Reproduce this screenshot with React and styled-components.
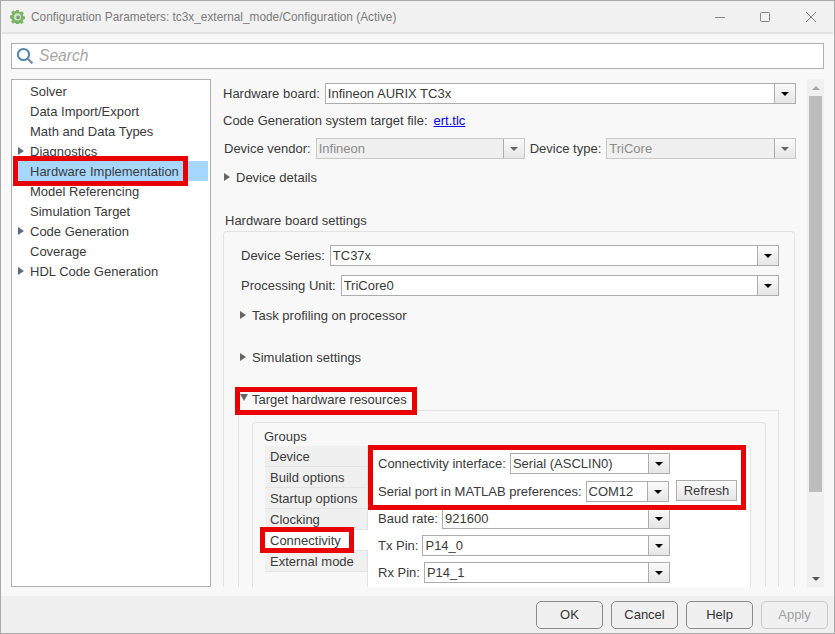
import React from "react";
import styled, { createGlobalStyle } from "styled-components";

const GlobalStyle = createGlobalStyle`
  html, body {
    margin: 0;
    padding: 0;
    background: #fff;
  }
  * {
    box-sizing: border-box;
  }
`;

const treeItems = [
  { label: "Solver" },
  { label: "Data Import/Export" },
  { label: "Math and Data Types" },
  { label: "Diagnostics", branch: true },
  { label: "Hardware Implementation", selected: true },
  { label: "Model Referencing" },
  { label: "Simulation Target" },
  { label: "Code Generation", branch: true },
  { label: "Coverage" },
  { label: "HDL Code Generation", branch: true },
];

const groupTabs = ["Device", "Build options", "Startup options", "Clocking", "Connectivity", "External mode"];

const App = () => {
  return (
    <Window>
      <GlobalStyle />
      <TitleBar>
        <svg width="15" height="15" viewBox="0 0 16 16">
          <path
            d="M6.6 1h2.8l.4 1.9 1.3.6 1.7-1 1.9 2-1 1.6.5 1.4 1.8.4v2.8l-1.8.4-.6 1.4 1 1.6-2 1.9-1.6-1-1.4.5-.4 1.5H6.6l-.4-1.7-1.4-.6-1.6 1-2-2 1-1.6-.5-1.3L0 9.9V7l1.7-.4.6-1.4-1-1.6 2-1.9 1.6 1 1.4-.6z"
            fill="#79b565"
          />
          <circle cx="8" cy="8.4" r="3.8" fill="#cfe3c2" />
          <circle cx="8.6" cy="9" r="2" fill="#7f9d78" />
        </svg>
        <TitleText>Configuration Parameters: tc3x_external_mode/Configuration (Active)</TitleText>
        <WindowControls>
          <svg width="102" height="12" viewBox="0 0 102 12" fill="none" stroke="#858585">
            <path d="M0 6.5h10" />
            <rect x="45.5" y="1.5" width="9" height="9" rx="1" />
            <path d="M91 1l10 10M101 1L91 11" />
          </svg>
        </WindowControls>
      </TitleBar>

      <Main>
        <SearchBox>
          <svg width="18" height="18" viewBox="0 0 18 18" fill="none">
            <circle cx="7.5" cy="7.5" r="5.6" stroke="#5585ad" strokeWidth="2" />
            <path d="M11.8 11.8l4.6 4.6" stroke="#7a8a99" strokeWidth="2.2" />
          </svg>
          <SearchText>Search</SearchText>
        </SearchBox>

        <Content>
          <Tree>
            {treeItems.map((item) => (
              <TreeRow key={item.label} $selected={item.selected}>
                {item.branch && <TreeCaret />}
                <TreeLabel>
                  {item.label}
                  {item.selected && <Highlight $inset="-5px" />}
                </TreeLabel>
              </TreeRow>
            ))}
          </Tree>

          <PaneFrame>
            <Pane>
              <Row $top={4}>
                <Label>Hardware board:</Label>
                <Combo value="Infineon AURIX TC3x" />
              </Row>
              <TextRow $top={6}>
                <Label>Code Generation system target file:</Label>
                <Link>ert.tlc</Link>
              </TextRow>
              <Row $top={8}>
                <Label $left={1}>Device vendor:</Label>
                <Combo value="Infineon" disabled width={209} />
                <Label>Device type:</Label>
                <Combo value="TriCore" disabled />
              </Row>
              <Disclosure $top={8} $left={1}>
                <Caret />
                Device details
              </Disclosure>
              <SectionTitle>Hardware board settings</SectionTitle>

              <BoardPanel>
                <IndentRow $top={13}>
                  <Label>Device Series:</Label>
                  <Combo value="TC37x" />
                </IndentRow>
                <IndentRow $top={9}>
                  <Label>Processing Unit:</Label>
                  <Combo value="TriCore0" />
                </IndentRow>
                <Disclosure $top={9} $left={2}>
                  <Caret />
                  Task profiling on processor
                </Disclosure>
                <Disclosure $top={22} $left={2}>
                  <Caret />
                  Simulation settings
                </Disclosure>
                <Disclosure $top={22} $left={2}>
                  <Caret $open />
                  Target hardware resources
                  <Highlight $inset="-2px -10px -6px -5px" />
                </Disclosure>

                <TargetPanel>
                  <GroupsPanel>
                    <GroupsLabel>Groups</GroupsLabel>
                    <TabSet>
                      <TabList>
                        {groupTabs.map((tab) => (
                          <Tab key={tab} $active={tab === "Connectivity"}>
                            {tab}
                            {tab === "Connectivity" && <Highlight $inset="-3px 14px -3px -5px" />}
                          </Tab>
                        ))}
                      </TabList>
                      <TabBody>
                        <Highlight $inset="-2px auto auto 0" $width={378} $height={65} />
                        <PinRow $top={6}>
                          <Label>Connectivity interface:</Label>
                          <Combo value="Serial (ASCLIN0)" />
                        </PinRow>
                        <PinRow $top={7} $withButton>
                          <Label>Serial port in MATLAB preferences:</Label>
                          <Combo value="COM12" />
                          <SmallButton>Refresh</SmallButton>
                        </PinRow>
                        <PinRow $top={6}>
                          <Label>Baud rate:</Label>
                          <Combo value="921600" />
                        </PinRow>
                        <PinRow $top={6}>
                          <Label>Tx Pin:</Label>
                          <Combo value="P14_0" />
                        </PinRow>
                        <PinRow $top={6}>
                          <Label>Rx Pin:</Label>
                          <Combo value="P14_1" />
                        </PinRow>
                      </TabBody>
                    </TabSet>
                  </GroupsPanel>
                </TargetPanel>
              </BoardPanel>
            </Pane>
            <ScrollBar>
              <ScrollArrow />
              <ScrollTrack>
                <ScrollThumb />
              </ScrollTrack>
              <ScrollArrow $down />
            </ScrollBar>
          </PaneFrame>
        </Content>
      </Main>

      <Footer>
        <FooterButton>OK</FooterButton>
        <FooterButton>Cancel</FooterButton>
        <FooterButton>Help</FooterButton>
        <FooterButton disabled>Apply</FooterButton>
      </Footer>
    </Window>
  );
};

const Combo = ({ value, disabled, width }) => (
  <ComboBox $disabled={disabled} $width={width}>
    <ComboValue>{value}</ComboValue>
    <ComboButton>
      <ComboArrow $disabled={disabled} />
    </ComboButton>
  </ComboBox>
);

export default App;

const Window = styled.div`
  display: flex;
  flex-direction: column;
  width: 835px;
  height: 634px;
  overflow: hidden;
  border: 1px solid #a9a9a9;
  background: #f8f8f8;
  color: #3a3a3a;
  font-family: "Liberation Sans", Arial, sans-serif;
  font-size: 13px;
`;
const TitleBar = styled.div`
  display: flex;
  align-items: center;
  flex: none;
  height: 31px;
  padding-left: 9px;
  gap: 6px;
  background: #f1f1f1;
`;
const TitleText = styled.div`
  font-size: 11.85px;
  color: #7b7b7b;
`;
const WindowControls = styled.div`
  display: flex;
  margin-left: auto;
  margin-right: 17px;
`;
const Main = styled.div`
  display: flex;
  flex: 1;
  flex-direction: column;
  min-height: 0;
  margin: 0 1px;
  padding: 9px 9px 9px 9px;
  border-top: 2px solid #e3e3e3;
`;
const SearchBox = styled.div`
  display: flex;
  align-items: center;
  flex: none;
  height: 26px;
  padding-left: 4px;
  gap: 5px;
  border: 1px solid #b0b0b0;
  background: #fff;
`;
const SearchText = styled.span`
  font-size: 15.6px;
  font-style: italic;
  color: #a6a6a6;
`;
const Content = styled.div`
  display: flex;
  flex: 1;
  min-height: 0;
  margin-top: 10px;
  gap: 11px;
`;
const Tree = styled.div`
  flex: none;
  width: 200px;
  padding-top: 1px;
  border: 1px solid #b0b0b0;
  background: #fff;
`;
const TreeRow = styled.div`
  position: relative;
  display: flex;
  align-items: center;
  height: 20px;
  margin-left: 6px;
  margin-right: 2px;
  background: ${(p) => (p.$selected ? "#a6d8ff" : "transparent")};
`;
const TreeCaret = styled.i`
  position: absolute;
  left: 0;
  top: 6px;
  border-left: 6px solid #5f6b78;
  border-top: 4px solid transparent;
  border-bottom: 4px solid transparent;
`;
const TreeLabel = styled.span`
  position: relative;
  display: block;
  height: 20px;
  padding: 0 4px 0 12px;
  line-height: 22px;
  white-space: nowrap;
`;
const Highlight = styled.span`
  position: absolute;
  inset: ${(p) => p.$inset};
  width: ${(p) => (p.$width ? `${p.$width}px` : "auto")};
  height: ${(p) => (p.$height ? `${p.$height}px` : "auto")};
  border: 5px solid #e90000;
  pointer-events: none;
  z-index: 2;
`;
const PaneFrame = styled.div`
  display: flex;
  flex: 1;
  min-width: 0;
`;
const Pane = styled.div`
  flex: none;
  width: 585px;
  padding: 0 11px 0 1px;
  overflow: hidden;
`;
const Row = styled.div`
  display: flex;
  align-items: center;
  height: 21px;
  margin-top: ${(p) => p.$top || 0}px;
  gap: 5px;
  white-space: nowrap;
`;
const TextRow = styled(Row)`
  gap: 6px;
  height: 20px;
`;
const Label = styled.span`
  flex: none;
  margin-left: ${(p) => p.$left || 0}px;
  white-space: nowrap;
`;
const Link = styled.span`
  color: #0000ee;
  text-decoration: underline;
`;
const ComboBox = styled.div`
  display: flex;
  flex: ${(p) => (p.$width ? `none` : 1)};
  width: ${(p) => (p.$width ? `${p.$width}px` : "auto")};
  min-width: 0;
  height: 21px;
  border: 1px solid ${(p) => (p.$disabled ? "#c8c8c8" : "#adadad")};
  background: ${(p) => (p.$disabled ? "#f0f0f0" : "#fff")};
  color: ${(p) => (p.$disabled ? "#8a8a8a" : "#3a3a3a")};
`;
const ComboValue = styled.span`
  flex: 1;
  padding-left: 2px;
  line-height: 19px;
  overflow: hidden;
  white-space: nowrap;
`;
const ComboButton = styled.span`
  display: flex;
  align-items: center;
  justify-content: center;
  flex: none;
  width: 21px;
  border-left: 1px solid #adadad;
  background: linear-gradient(#fafafa, #e6e6e6);
`;
const ComboArrow = styled.i`
  border-top: 4px solid ${(p) => (p.$disabled ? "#666" : "#000")};
  border-left: 4px solid transparent;
  border-right: 4px solid transparent;
`;
const Disclosure = styled.div`
  position: relative;
  display: flex;
  align-items: center;
  width: fit-content;
  height: 20px;
  margin-top: ${(p) => p.$top || 0}px;
  margin-left: ${(p) => p.$left || 0}px;
  gap: 5px;
  white-space: nowrap;
`;
const Caret = styled.i`
  flex: none;
  ${(p) =>
    p.$open
      ? `border-top: 7px solid #666;
         border-left: 4px solid transparent;
         border-right: 4px solid transparent;
         margin-top: -3px;
         margin-right: -1px;`
      : `border-left: 6px solid #666;
         border-top: 4px solid transparent;
         border-bottom: 4px solid transparent;
         margin-right: 1px;`}
`;
const SectionTitle = styled.div`
  height: 20px;
  margin-top: 23px;
  margin-left: 2px;
  line-height: 22px;
`;
const BoardPanel = styled.div`
  margin-top: 1px;
  padding: 0 15px 0 14px;
  border: 1px solid #e2e2e2;
  border-bottom: none;
  border-radius: 4px 4px 0 0;
  margin-right: 1px;
`;
const IndentRow = styled(Row)`
  padding-left: 3px;
`;
const TargetPanel = styled.div`
  margin-top: 1px;
  padding: 11px 12px 0 13px;
  border: 1px solid #e2e2e2;
  border-bottom: none;
`;
const GroupsPanel = styled.div`
  padding: 5px 14px 0 11px;
  border: 1px solid #e2e2e2;
  border-bottom: none;
  border-radius: 4px 4px 0 0;
`;
const GroupsLabel = styled.div`
  height: 18px;
  line-height: 18px;
`;
const TabSet = styled.div`
  display: flex;
  min-height: 220px;
`;
const TabList = styled.div`
  flex: none;
  width: 102px;
  margin-left: 1px;
`;
const Tab = styled.div`
  position: relative;
  height: 21px;
  padding-left: 5px;
  margin-right: ${(p) => (p.$active ? "-1px" : 0)};
  line-height: 22px;
  background: ${(p) => (p.$active ? "#fff" : "#f0f0f0")};
  border-bottom: 1px solid #e4e4e4;
  z-index: ${(p) => (p.$active ? 1 : 0)};
`;
const TabBody = styled.div`
  position: relative;
  flex: 1;
  min-width: 0;
  padding-left: 10px;
  border: 1px solid #e2e2e2;
  border-bottom: none;
  border-radius: 0 4px 0 0;
  background: #fff;
`;
const PinRow = styled(Row)`
  gap: 4px;
  padding-right: ${(p) => (p.$withButton ? 13 : 80)}px;
`;
const SmallButton = styled.span`
  flex: none;
  width: 61px;
  height: 21px;
  margin-left: 3px;
  margin-top: -2px;
  border: 1px solid #adadad;
  background: linear-gradient(#fafafa, #e6e6e6);
  line-height: 19px;
  text-align: center;
`;
const ScrollBar = styled.div`
  display: flex;
  flex: none;
  flex-direction: column;
  width: 17px;
  background: #f0f0f0;
`;
const ScrollArrow = styled.div`
  display: flex;
  flex: none;
  justify-content: center;
  align-items: center;
  height: 17px;
  &::before {
    content: "";
    border-left: 4px solid transparent;
    border-right: 4px solid transparent;
    ${(p) => (p.$down ? "border-top: 4px solid #555;" : "border-bottom: 4px solid #a8a8a8;")}
  }
`;
const ScrollTrack = styled.div`
  flex: 1;
  padding: 0 2px;
`;
const ScrollThumb = styled.div`
  height: 396px;
  background: #bdbdbd;
`;
const Footer = styled.div`
  display: flex;
  flex: none;
  justify-content: flex-end;
  align-items: center;
  height: 37px;
  padding-right: 6px;
  gap: 8px;
  background: #f0f0f0;
`;
const FooterButton = styled.span`
  width: 67px;
  height: 28px;
  border: 1px solid ${(p) => (p.disabled ? "#c8c8c8" : "#8a8a8a")};
  border-radius: 5px;
  color: ${(p) => (p.disabled ? "#a0a0a0" : "#333")};
  line-height: 26px;
  text-align: center;
`;
